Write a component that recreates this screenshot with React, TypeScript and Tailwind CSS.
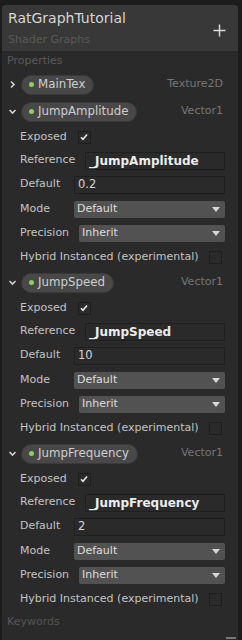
const font = { fontFamily: '"DejaVu Sans", Verdana, sans-serif' }

type Prop = { name: string; def: string }

const props: Prop[] = [
  { name: 'JumpAmplitude', def: '0.2' },
  { name: 'JumpSpeed', def: '10' },
  { name: 'JumpFrequency', def: '2' },
]

function Chevron({ open }: { open: boolean }) {
  return (
    <svg width="9" height="9" viewBox="0 0 9 9" className="shrink-0">
      {open ? (
        <path d="M1.5 3 L4.5 6 L7.5 3" stroke="#d0d0d0" strokeWidth="1.6" fill="none" />
      ) : (
        <path d="M3 1.5 L6 4.5 L3 7.5" stroke="#d0d0d0" strokeWidth="1.6" fill="none" />
      )}
    </svg>
  )
}

function Pill({ name, type, open }: { name: string; type: string; open: boolean }) {
  return (
    <div className="flex items-center h-[27px] pl-[6px] pr-[15px] whitespace-nowrap">
      <div className="w-[13px] flex items-center">
        <Chevron open={open} />
      </div>
      <div className="flex items-center h-[20px] rounded-full bg-[#484848] border border-[#3a3a3a] pl-[7px] pr-[8px] gap-[4px]">
        <span className="w-[5px] h-[5px] rounded-full bg-[#8ed15a]" />
        <span className="text-[11.8px] text-[#cfcfcf]">{name}</span>
      </div>
      <span className="ml-auto text-[11px] text-[#767676]">{type}</span>
    </div>
  )
}

function Check({ checked }: { checked: boolean }) {
  return (
    <span className="w-[13px] h-[13px] bg-[#2a2a2a] border border-[#1e1e1e] flex items-center justify-center">
      {checked && (
        <svg width="10" height="10" viewBox="0 0 10 10">
          <path d="M2 5.2 L4 7.3 L8 2.5" stroke="#e8e8e8" strokeWidth="1.6" fill="none" />
        </svg>
      )}
    </span>
  )
}

function Dropdown({ value }: { value: string }) {
  return (
    <div className="flex-1 h-[17px] bg-[#525252] rounded-[2px] flex items-center pl-[3px] pr-[5px] text-[11px] text-[#dedede]">
      <span>{value}</span>
      <svg width="8" height="5" viewBox="0 0 8 5" className="ml-auto">
        <path d="M0 0 L8 0 L4 5 Z" fill="#d8d8d8" />
      </svg>
    </div>
  )
}

function Field({ children, bold }: { children: React.ReactNode; bold?: boolean }) {
  return (
    <div
      className={`flex-1 h-[18px] bg-[#2a2a2a] border border-[#1f1f1f] flex items-center pl-[3px] ${
        bold ? 'text-[12px] font-bold text-[#ececec]' : 'text-[11.5px] text-[#d4d4d4]'
      }`}
    >
      {children}
    </div>
  )
}

function Block({ p }: { p: Prop }) {
  return (
    <div>
      <Pill name={p.name} type="Vector1" open />
      <div className="pl-[18px] pr-[13px] text-[11px] text-[#c4c4c4] whitespace-nowrap">
        <div className="h-[24px] flex items-center gap-[11px]">
          <span>Exposed</span>
          <Check checked />
        </div>
        <div className="h-[23px] flex items-center">
          <span className="w-[65px] shrink-0">Reference</span>
          <Field bold>_{p.name}</Field>
        </div>
        <div className="h-[25px] flex items-center">
          <span className="w-[54px] shrink-0">Default</span>
          <Field>{p.def}</Field>
        </div>
        <div className="h-[25px] flex items-center">
          <span className="w-[54px] shrink-0">Mode</span>
          <Dropdown value="Default" />
        </div>
        <div className="h-[23px] flex items-center">
          <span className="w-[59px] shrink-0">Precision</span>
          <Dropdown value="Inherit" />
        </div>
        <div className="h-[24px] flex items-center justify-between pr-[3px]">
          <span>Hybrid Instanced (experimental)</span>
          <Check checked={false} />
        </div>
      </div>
    </div>
  )
}

export default function App() {
  return (
    <div className="w-[242px] h-[640px] bg-[#1c1c1c] pt-[5px] pl-[2px] pr-[4px] overflow-hidden" style={font}>
      <div className="h-full bg-[#2a2a2a] rounded-t-[4px] overflow-hidden flex flex-col">
        <div className="h-[46px] bg-[#383838] flex items-center pl-[6px] pr-[12px] shrink-0">
          <div className="flex flex-col">
            <span className="text-[14px] text-[#d6d6d6] leading-[18px]">RatGraphTutorial</span>
            <span className="text-[11px] text-[#585858] leading-[16px] mt-[5px]">Shader Graphs</span>
          </div>
          <svg width="13" height="13" viewBox="0 0 13 13" className="ml-auto mt-[4px]">
            <path d="M6.5 0.5 V12.5 M0.5 6.5 H12.5" stroke="#d8d8d8" strokeWidth="1.5" />
          </svg>
        </div>
        <div className="pl-[5px] pt-[2px] h-[20px] text-[11px] text-[#5a5a5a]">Properties</div>
        <Pill name="MainTex" type="Texture2D" open={false} />
        {props.map((p) => (
          <Block key={p.name} p={p} />
        ))}
        <div className="pl-[5px] pt-[3px] text-[11px] text-[#555555]">Keywords</div>
        <div className="mt-auto flex justify-end pr-[2px] pb-[1px]">
          <span className="w-[10px] h-[2px] bg-[#777]" />
        </div>
      </div>
    </div>
  )
}
